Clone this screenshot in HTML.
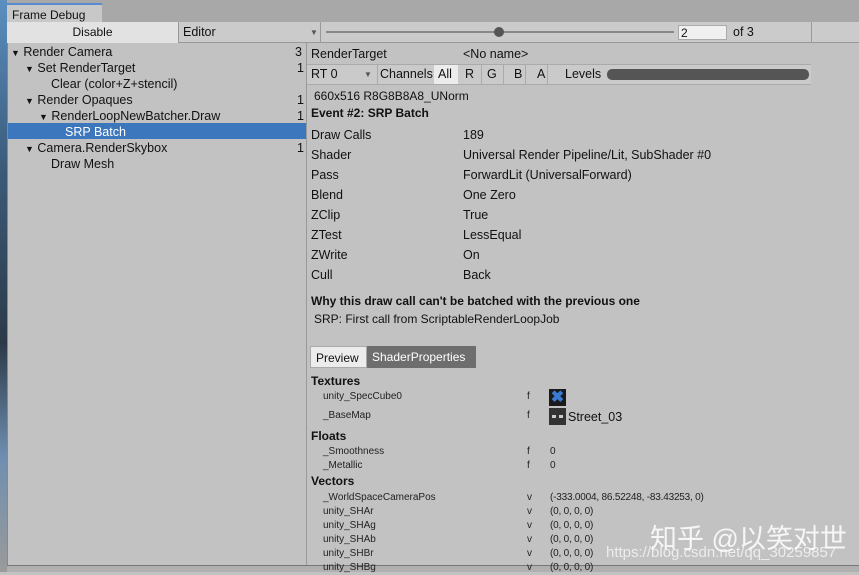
<!DOCTYPE html>
<html><head><style>
*{margin:0;padding:0;box-sizing:border-box}
body{width:859px;height:572px;overflow:hidden;background:#c2c2c2;font-family:"Liberation Sans",sans-serif;font-size:12px;color:#111;position:relative}
.a{position:absolute;white-space:nowrap}
.b{font-weight:bold}
.s{font-size:10px;color:#222}
.m{font-size:12.5px}
</style></head><body>
<div class="a" style="left:0;top:0;width:859px;height:22px;background:#a8a8a8"></div>
<div class="a" style="left:0;top:0;width:7px;height:572px;background:linear-gradient(#5a8fc0,#3b5a78 30%,#2c3a48 60%,#6f8fb0 80%,#9a9a9a)"></div>
<div class="a" style="left:7px;top:3px;width:95px;height:20px;background:#c8c8c8;border-top:2px solid #5a8ad0;padding:3px 5px">Frame Debug</div>
<div class="a" style="left:7px;top:22px;width:852px;height:21px;background:#cbcbcb;border-bottom:1px solid #999"></div>
<div class="a" style="left:7px;top:22px;width:172px;height:21px;background:#e2e2e2;border-right:1px solid #999;text-align:center;padding-top:3px" class="m">Disable</div>
<div class="a m" style="left:183px;top:25px">Editor</div>
<div class="a" style="left:310px;top:28px;font-size:8px;color:#555">▼</div>
<div class="a" style="left:320px;top:22px;width:1px;height:21px;background:#999"></div>
<div class="a" style="left:326px;top:31px;width:348px;height:2px;background:#888"></div>
<div class="a" style="left:494px;top:27px;width:10px;height:10px;border-radius:5px;background:#555"></div>
<div class="a" style="left:678px;top:25px;width:49px;height:15px;background:#f0f0f0;border:1px solid #aaa;padding-left:2px;font-size:12px">2</div>
<div class="a m" style="left:733px;top:25px">of 3</div>
<div class="a" style="left:811px;top:22px;width:1px;height:21px;background:#999"></div>
<div class="a" style="left:7px;top:43px;width:1px;height:522px;background:#888"></div>
<div class="a" style="left:306px;top:43px;width:1px;height:522px;background:#999"></div>
<div class="a" style="left:7px;top:565px;width:852px;height:7px;background:#b0b0b0;border-top:1px solid #777"></div>
<div class="a" style="left:8px;top:123px;width:298px;height:16px;background:#3c76bd"></div>
<div class="a m" style="left:11px;top:44px;line-height:16px"><span style="font-size:9px">▼</span> Render Camera</div>
<div class="a m" style="left:25px;top:60px;line-height:16px"><span style="font-size:9px">▼</span> Set RenderTarget</div>
<div class="a m" style="left:51px;top:76px;line-height:16px">Clear (color+Z+stencil)</div>
<div class="a m" style="left:25px;top:92px;line-height:16px"><span style="font-size:9px">▼</span> Render Opaques</div>
<div class="a m" style="left:39px;top:108px;line-height:16px"><span style="font-size:9px">▼</span> RenderLoopNewBatcher.Draw</div>
<div class="a m" style="left:65px;top:124px;line-height:16px;color:#fff">SRP Batch</div>
<div class="a m" style="left:25px;top:140px;line-height:16px"><span style="font-size:9px">▼</span> Camera.RenderSkybox</div>
<div class="a m" style="left:51px;top:156px;line-height:16px">Draw Mesh</div>
<div class="a m" style="left:295px;top:44px;line-height:16px">3</div>
<div class="a m" style="left:297px;top:60px;line-height:16px">1</div>
<div class="a m" style="left:297px;top:92px;line-height:16px">1</div>
<div class="a m" style="left:297px;top:108px;line-height:16px">1</div>
<div class="a m" style="left:297px;top:140px;line-height:16px">1</div>
<div class="a m" style="left:311px;top:47px">RenderTarget</div>
<div class="a m" style="left:463px;top:47px">&lt;No name&gt;</div>
<div class="a" style="left:307px;top:64px;width:504px;height:21px;background:#cacaca;border-top:1px solid #aaa;border-bottom:1px solid #aaa"></div>
<div class="a m" style="left:311px;top:67px">RT 0</div>
<div class="a" style="left:364px;top:70px;font-size:8px;color:#555">▼</div>
<div class="a" style="left:377px;top:64px;width:1px;height:21px;background:#aaa"></div>
<div class="a m" style="left:380px;top:67px">Channels</div>
<div class="a" style="left:434px;top:65px;width:24px;height:19px;background:#ececec"></div>
<div class="a m" style="left:438px;top:67px">All</div>
<div class="a m" style="left:465px;top:67px">R</div><div class="a" style="left:481px;top:64px;width:1px;height:21px;background:#aaa"></div>
<div class="a m" style="left:487px;top:67px">G</div><div class="a" style="left:503px;top:64px;width:1px;height:21px;background:#aaa"></div>
<div class="a m" style="left:514px;top:67px">B</div><div class="a" style="left:525px;top:64px;width:1px;height:21px;background:#aaa"></div>
<div class="a m" style="left:537px;top:67px">A</div><div class="a" style="left:547px;top:64px;width:1px;height:21px;background:#aaa"></div>
<div class="a m" style="left:565px;top:67px">Levels</div>
<div class="a" style="left:607px;top:69px;width:202px;height:11px;background:#555;border-radius:5px"></div>
<div class="a" style="left:314px;top:89px;font-size:12px">660x516 R8G8B8A8_UNorm</div>
<div class="a b" style="left:311px;top:106px;font-size:12px">Event #2: SRP Batch</div>
<div style="position:absolute;left:311px;top:125px;font-size:12.5px;line-height:20px">Draw Calls<br>Shader<br>Pass<br>Blend<br>ZClip<br>ZTest<br>ZWrite<br>Cull</div>
<div style="position:absolute;left:463px;top:125px;font-size:12.5px;line-height:20px;white-space:nowrap">189<br>Universal Render Pipeline/Lit, SubShader #0<br>ForwardLit (UniversalForward)<br>One Zero<br>True<br>LessEqual<br>On<br>Back</div>
<div class="a b" style="left:311px;top:294px;font-size:12px">Why this draw call can't be batched with the previous one</div>
<div class="a" style="left:314px;top:312px;font-size:12px">SRP: First call from ScriptableRenderLoopJob</div>
<div class="a" style="left:310px;top:346px;width:57px;height:22px;background:#ececec;border:1px solid #aaa;padding:4px 5px;font-size:12px">Preview</div>
<div class="a" style="left:367px;top:346px;width:109px;height:22px;background:#6e6e6e;color:#fff;padding:4px 5px;font-size:12px">ShaderProperties</div>
<div class="a b" style="left:311px;top:374px;font-size:12px">Textures</div>
<div class="a s" style="left:323px;top:391px">unity_SpecCube0</div><div class="a s" style="left:527px;top:391px">f</div>
<div class="a" style="left:549px;top:389px;width:17px;height:17px;background:#1a1a1a;color:#3a7ad0;font-size:16px;line-height:17px;text-align:center;font-weight:bold">✖</div>
<div class="a s" style="left:323px;top:410px">_BaseMap</div><div class="a s" style="left:527px;top:410px">f</div>
<div class="a" style="left:549px;top:408px;width:17px;height:17px;background:#333"><div style="position:absolute;left:3px;top:7px;width:4px;height:3px;background:#ccc"></div><div style="position:absolute;left:10px;top:7px;width:4px;height:3px;background:#ccc"></div></div>
<div class="a m" style="left:568px;top:410px">Street_03</div>
<div class="a b" style="left:311px;top:429px;font-size:12px">Floats</div>
<div class="a s" style="left:323px;top:446px">_Smoothness</div><div class="a s" style="left:527px;top:446px">f</div><div class="a s" style="left:550px;top:446px">0</div>
<div class="a s" style="left:323px;top:460px">_Metallic</div><div class="a s" style="left:527px;top:460px">f</div><div class="a s" style="left:550px;top:460px">0</div>
<div class="a b" style="left:311px;top:474px;font-size:12px">Vectors</div>
<div style="position:absolute;left:323px;top:491px;font-size:10px;line-height:14px;color:#222">_WorldSpaceCameraPos<br>unity_SHAr<br>unity_SHAg<br>unity_SHAb<br>unity_SHBr<br>unity_SHBg</div>
<div style="position:absolute;left:527px;top:491px;font-size:10px;line-height:14px;color:#222">v<br>v<br>v<br>v<br>v<br>v</div>
<div style="position:absolute;left:550px;top:491px;font-size:10px;line-height:14px;color:#222;white-space:nowrap;letter-spacing:-0.2px">(-333.0004, 86.52248, -83.43253, 0)<br>(0, 0, 0, 0)<br>(0, 0, 0, 0)<br>(0, 0, 0, 0)<br>(0, 0, 0, 0)<br>(0, 0, 0, 0)</div>
<div class="a" style="left:650px;top:517px;font-size:27px;color:rgba(255,255,255,0.85);font-family:'Liberation Sans','Noto Sans CJK SC',sans-serif">知乎 @以笑对世</div>
<div class="a" style="left:606px;top:544px;font-size:15px;color:rgba(255,255,255,0.7)">https://blog.csdn.net/qq_30259857</div>
</body></html>
